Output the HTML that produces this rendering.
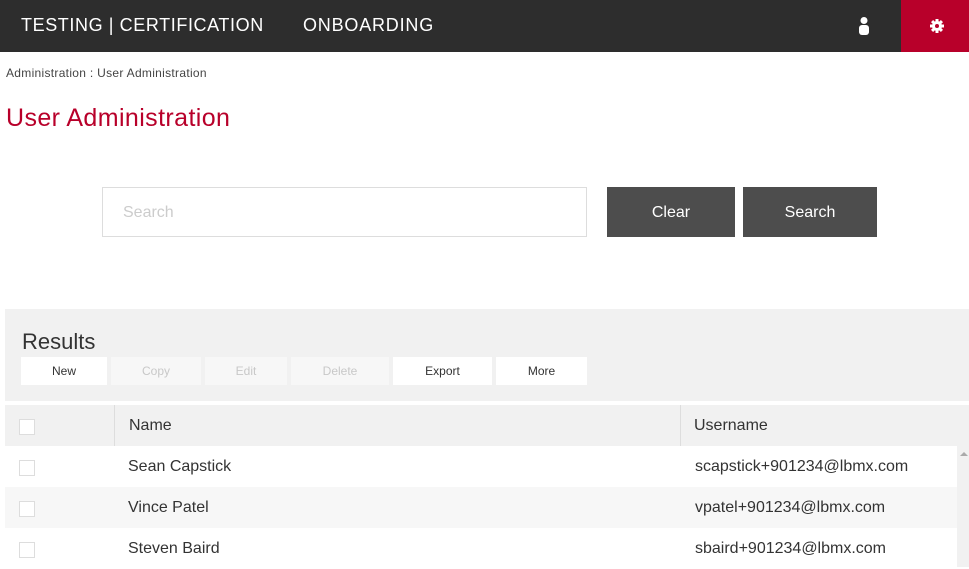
<!DOCTYPE html>
<html><head><style>
*{margin:0;padding:0;box-sizing:border-box}
body{width:969px;height:567px;overflow:hidden;background:#fff;font-family:"Liberation Sans",sans-serif;color:#333;position:relative}
.nav{position:absolute;left:0;top:0;width:969px;height:52px;background:#2d2d2d}
.nav .t{position:absolute;top:15px;color:#fff;font-size:18px;letter-spacing:0.8px}
.gear{position:absolute;left:901px;top:0;width:68px;height:52px;background:#b8002a}
.abs{position:absolute}
.btn{position:absolute;background:#4d4d4d;color:#fff;font-size:16px;text-align:center;line-height:52px;top:187px;height:50px}
.tb{position:absolute;top:357px;height:28px;line-height:28px;font-size:12px;text-align:center;background:#fff;color:#333}
.tb.d{background:#f7f7f7;color:#c8c8c8}
.cb{position:absolute;left:19px;width:16px;height:16px;border:1px solid #ddd;background:#fff}
.row{position:absolute;left:5px;width:952px;height:41px}
.row span{position:absolute;top:12px;font-size:16px;color:#333}
</style></head><body>
<div class="nav">
<div class="t" style="left:21px;letter-spacing:0.6px">TESTING | CERTIFICATION</div>
<div class="t" style="left:303px">ONBOARDING</div>
<svg class="abs" style="left:857px;top:16px" width="14" height="20" viewBox="0 0 14 20"><circle cx="7" cy="4.5" r="3.5" fill="#fff"/><rect x="2" y="9" width="10" height="10" rx="3" fill="#fff"/></svg>
<div class="gear"><svg class="abs" style="left:28px;top:18px" width="16" height="16" viewBox="0 0 16 16"><g fill="#fff"><circle cx="8" cy="8" r="5"/><rect x="6.5" y="1" width="3" height="14"/><rect x="1" y="6.5" width="14" height="3"/><rect x="6.5" y="1" width="3" height="14" transform="rotate(45 8 8)"/><rect x="6.5" y="1" width="3" height="14" transform="rotate(-45 8 8)"/></g><circle cx="8" cy="8" r="2" fill="#b8002a"/></svg></div>
</div>
<div class="abs" style="left:6px;top:66px;font-size:12px;color:#444;letter-spacing:0.3px">Administration : User Administration</div>
<div class="abs" style="left:6px;top:104px;font-size:25px;color:#b8002a;letter-spacing:0.4px">User Administration</div>
<div class="abs" style="left:102px;top:187px;width:485px;height:50px;border:1px solid #ddd;font-size:16px;color:#ccc;padding:16px 20px">Search</div>
<div class="btn" style="left:607px;width:128px">Clear</div>
<div class="btn" style="left:743px;width:134px">Search</div>
<div class="abs" style="left:5px;top:309px;width:964px;height:92px;background:#f1f1f1"></div>
<div class="abs" style="left:22px;top:329px;font-size:22px;color:#333">Results</div>
<div class="tb" style="left:21px;width:86px">New</div>
<div class="tb d" style="left:111px;width:90px">Copy</div>
<div class="tb d" style="left:205px;width:82px">Edit</div>
<div class="tb d" style="left:291px;width:98px">Delete</div>
<div class="tb" style="left:393px;width:99px">Export</div>
<div class="tb" style="left:496px;width:91px">More</div>
<div class="row" style="top:405px;width:964px;background:#f1f1f1"><span style="left:124px">Name</span><span style="left:689px">Username</span></div>
<div class="abs" style="left:114px;top:405px;width:1px;height:41px;background:#ddd"></div>
<div class="abs" style="left:680px;top:405px;width:1px;height:41px;background:#ddd"></div>
<div class="cb" style="top:419px"></div>
<div class="row" style="top:446px;background:#fff"><span style="left:123px">Sean Capstick</span><span style="left:690px">scapstick+901234@lbmx.com</span></div>
<div class="row" style="top:487px;background:#f7f7f7"><span style="left:123px">Vince Patel</span><span style="left:690px">vpatel+901234@lbmx.com</span></div>
<div class="row" style="top:528px;background:#fff"><span style="left:123px">Steven Baird</span><span style="left:690px">sbaird+901234@lbmx.com</span></div>
<div class="cb" style="top:460px"></div>
<div class="cb" style="top:501px"></div>
<div class="cb" style="top:542px"></div>
<div class="abs" style="left:957px;top:446px;width:12px;height:121px;background:#f1f1f1"></div>
<div class="abs" style="left:960px;top:452px;width:0;height:0;border-left:4px solid transparent;border-right:4px solid transparent;border-bottom:4px solid #aaa"></div>
</body></html>
